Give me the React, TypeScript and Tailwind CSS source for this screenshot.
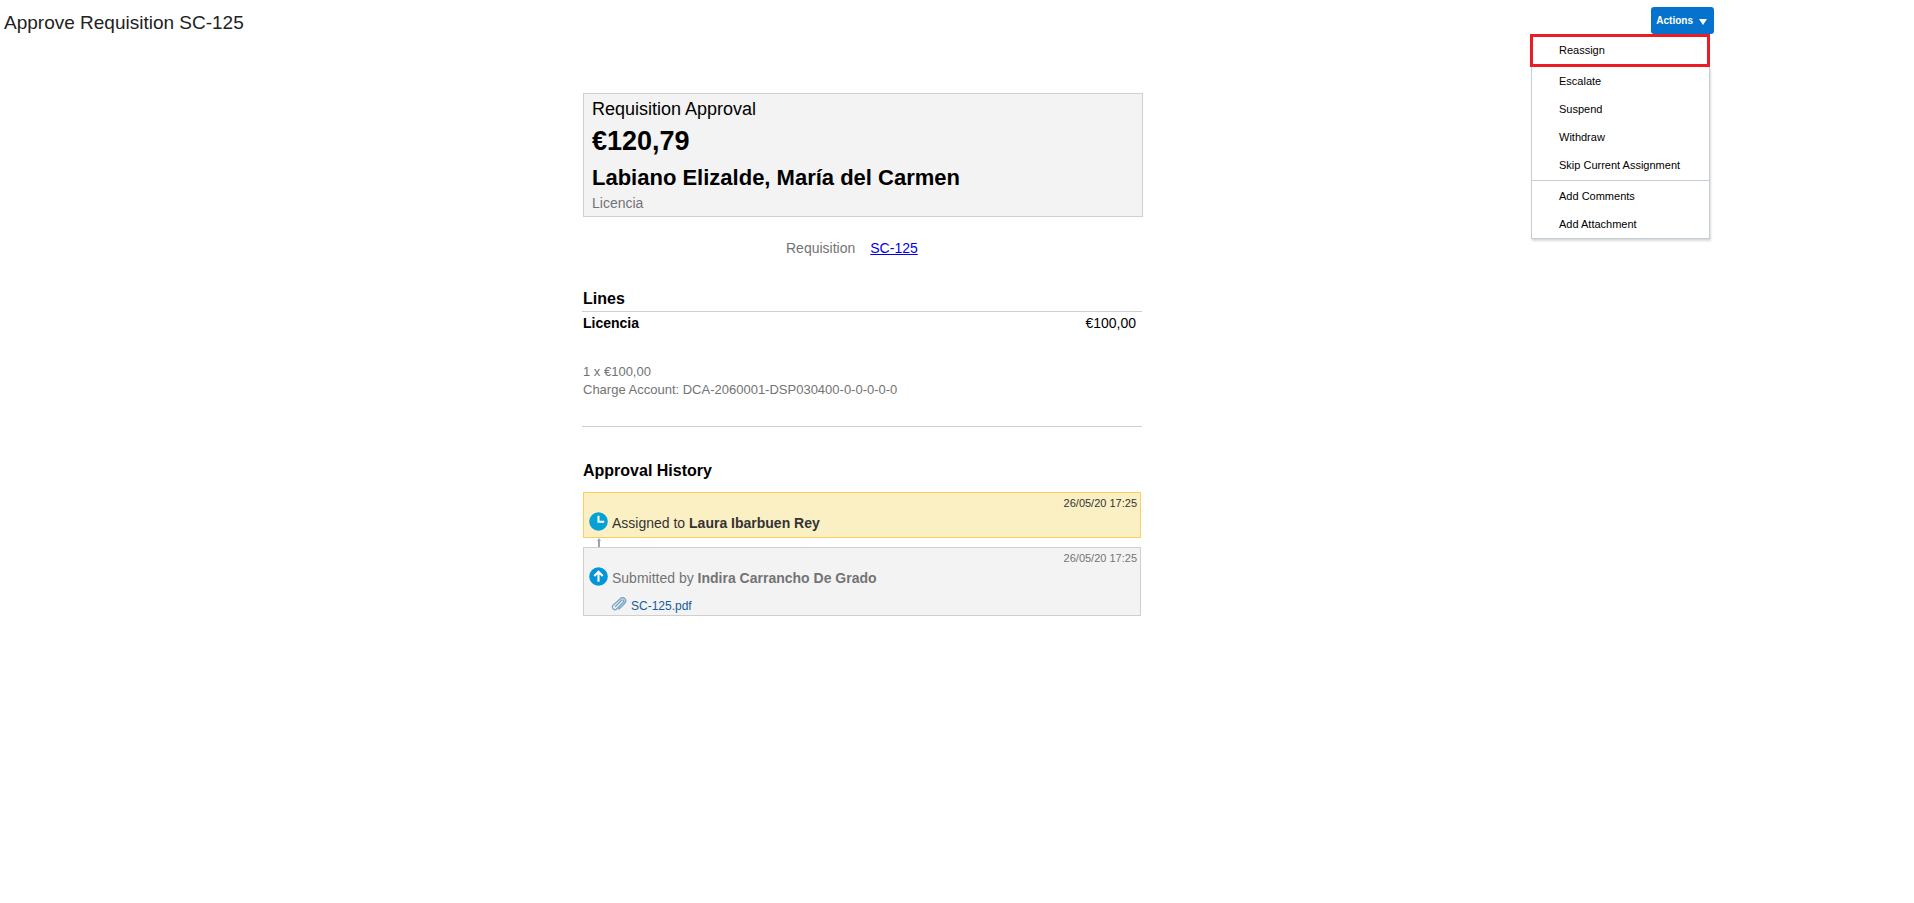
import { useState } from "react";

const primaryActions = ["Escalate", "Suspend", "Withdraw", "Skip Current Assignment"];
const secondaryActions = ["Add Comments", "Add Attachment"];

function MenuItem({ label }: { label: string }) {
  return (
    <li>
      <button type="button" className="block h-7 w-full pl-[27px] text-left text-[11px] leading-7 text-black">
        {label}
      </button>
    </li>
  );
}

function ActionsMenu() {
  const [open, setOpen] = useState(true);
  return (
    <div className="relative">
      <button
        type="button"
        aria-expanded={open}
        onClick={() => setOpen(!open)}
        className="flex h-[27px] items-center gap-1.5 rounded-[3px] bg-[#0572ce] pr-[7px] pl-[5px] text-[10px] leading-3 font-bold text-white"
      >
        Actions
        <svg width="8" height="6" viewBox="0 0 8 6" className="mt-0.5" aria-hidden="true">
          <path d="M0 0h8L4 6z" fill="currentColor" />
        </svg>
      </button>
      {open && (
        <div className="absolute top-[27px] right-1 w-[180px]">
          <button
            type="button"
            className="flex h-[33px] w-full items-start border-3 border-[#ed1c24] bg-white pl-[26px] text-[11px] leading-[26px] text-black"
          >
            Reassign
          </button>
          <div className="ml-px w-[179px] border border-t-0 border-[#c4ced7] bg-white shadow-[1px_2px_2px_rgba(0,0,0,0.15)]">
            <ul className="border-b border-[#c4ced7] pb-px">
              {primaryActions.map((label) => (
                <MenuItem key={label} label={label} />
              ))}
            </ul>
            <ul className="pt-px">
              {secondaryActions.map((label) => (
                <MenuItem key={label} label={label} />
              ))}
            </ul>
          </div>
        </div>
      )}
    </div>
  );
}

function ClockIcon() {
  return (
    <svg width="19" height="19" viewBox="0 0 19 19" aria-hidden="true">
      <circle cx="9.5" cy="9.5" r="9.3" fill="#04a1d6" />
      <path d="M9.5 3.8v5.9h5.7" fill="none" stroke="#fff" strokeWidth="2" />
    </svg>
  );
}

function SubmittedIcon() {
  return (
    <svg width="19" height="19" viewBox="0 0 19 19" aria-hidden="true">
      <circle cx="9.5" cy="9.5" r="9.3" fill="#0494dc" />
      <path d="M9.5 14.8V5M5.3 9l4.2-4.2L13.7 9" fill="none" stroke="#fff" strokeWidth="2.1" />
    </svg>
  );
}

function PaperclipIcon() {
  return (
    <svg width="16" height="15" viewBox="0 0 16 15" fill="none" strokeLinecap="round" aria-hidden="true">
      <path
        d="M4.5 9.5l6-6.2a1.3 1.3 0 0 1 2 1.8L6 11.8a2.4 2.4 0 0 1-3.6.2 2.5 2.5 0 0 1-.3-3.8L9 2a3.2 3.2 0 0 1 5 0 3.2 3.2 0 0 1-.2 4.2L8 12"
        stroke="#7aa7c7"
        strokeWidth="1.4"
      />
    </svg>
  );
}

export default function App() {
  return (
    <div className="pr-[189px] font-['Liberation_Sans',Arial,sans-serif] text-sm text-black">
      <header className="flex items-start justify-between pt-[7px] pr-[11px] pl-1">
        <h1 className="text-[19px] leading-8 text-[#222]">Approve Requisition SC-125</h1>
        <ActionsMenu />
      </header>

      <main className="mx-auto mt-[54px] max-w-[561px]">
        <section className="ml-px border border-[#cfcfcf] bg-[#f3f3f3] px-2 pt-1 pb-[3px]">
          <h2 className="text-[18px] leading-[22px]">Requisition Approval</h2>
          <p className="text-[27px] leading-[43px] font-bold">€120,79</p>
          <p className="text-[22px] leading-[30px] font-bold">Labiano Elizalde, María del Carmen</p>
          <p className="leading-5 text-[#737373]">Licencia</p>
        </section>

        <dl className="mt-[21px] flex gap-[15px] pl-[204px] leading-5">
          <dt className="text-[#737373]">Requisition</dt>
          <dd>
            <a href="#sc-125" className="text-[#0000ee] underline">
              SC-125
            </a>
          </dd>
        </dl>

        <section className="mt-[29px] mr-px">
          <h2 className="border-b border-[#cfcfcf] pl-px text-base leading-6 font-bold">Lines</h2>
          <div className="border-b border-[#cfcfcf] pr-1.5 pb-[27px] pl-px">
            <div className="flex justify-between leading-[22px]">
              <h3 className="font-bold">Licencia</h3>
              <span>€100,00</span>
            </div>
            <div className="mt-[29px] text-[13px] leading-[18px] text-[#737373]">
              <p>1 x €100,00</p>
              <p>Charge Account: DCA-2060001-DSP030400-0-0-0-0-0</p>
            </div>
          </div>
        </section>

        <section className="mt-8 pr-0.5 pl-px">
          <h2 className="text-base leading-6 font-bold">Approval History</h2>
          <ol className="mt-[9px]">
            <li className="border border-[#ffcd5c] bg-[#fbf0c3] pr-[3px] pb-[3px] pl-[5px] text-[#333]">
              <time className="block pt-0.5 text-right text-[11px] leading-[17px]">26/05/20 17:25</time>
              <div className="flex gap-1 leading-[22px]">
                <ClockIcon />
                <p>
                  Assigned to <strong>Laura Ibarbuen Rey</strong>
                </p>
              </div>
            </li>
            <li>
              <svg width="4" height="9" viewBox="0 0 4 9" className="ml-3.5 block" aria-hidden="true">
                <path d="M2 0L4 3H3v6H1V3H0z" fill="#98a6b4" />
              </svg>
              <div className="border border-[#cfcfcf] bg-[#f3f3f3] pr-[3px] pl-[5px] text-[#737373]">
                <time className="block pt-0.5 text-right text-[11px] leading-[17px]">26/05/20 17:25</time>
                <div className="flex gap-1 leading-[22px]">
                  <SubmittedIcon />
                  <p>
                    Submitted by <strong>Indira Carrancho De Grado</strong>
                  </p>
                </div>
                <a href="#sc-125-pdf" className="mt-2 ml-[22px] flex gap-1 text-xs leading-[18px] text-[#145c9e]">
                  <PaperclipIcon />
                  SC-125.pdf
                </a>
              </div>
            </li>
          </ol>
        </section>
      </main>
    </div>
  );
}
